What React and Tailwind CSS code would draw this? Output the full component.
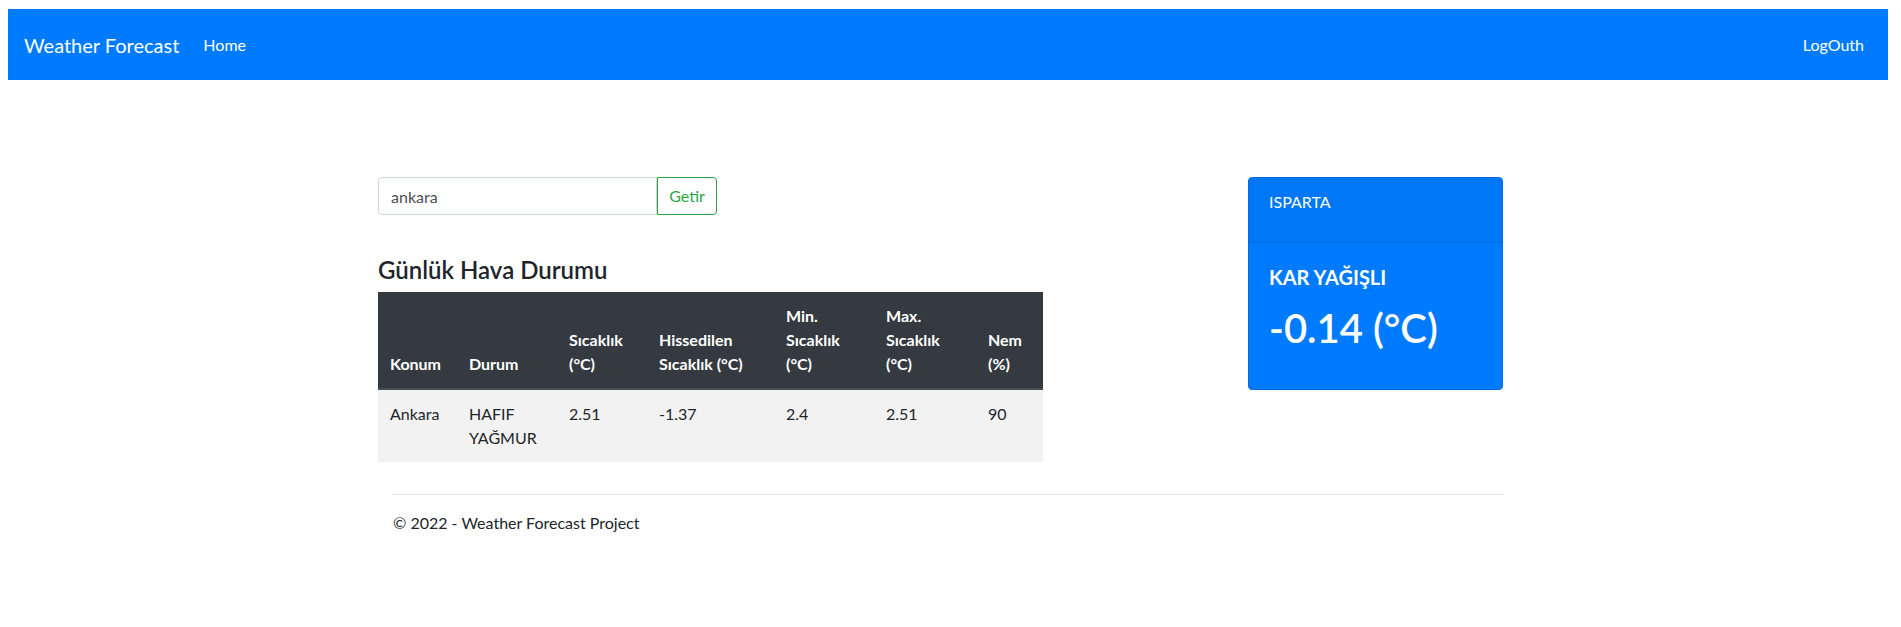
const columns = [
  { label: "Konum", width: "w-[79px]" },
  { label: "Durum", width: "w-[100px]" },
  { label: "Sıcaklık (°C)", width: "w-[90px]" },
  { label: "Hissedilen Sıcaklık (°C)", width: "w-[127px]" },
  { label: "Min. Sıcaklık (°C)", width: "w-[100px]" },
  { label: "Max. Sıcaklık (°C)", width: "w-[102px]" },
  { label: "Nem (%)", width: "w-[67px]" },
]

const rows = [["Ankara", "HAFIF YAĞMUR", "2.51", "-1.37", "2.4", "2.51", "90"]]

export default function App() {
  return (
    <div className="min-h-screen bg-white pl-2 pr-[13px] pt-[9px] font-['Lato','Open_Sans',sans-serif] text-base text-[#212529]">
      {/* Top bar */}
      <nav className="flex h-[71px] items-center bg-[#007bff] px-4 text-white">
        <span className="mr-4 text-xl">Weather Forecast</span>
        <a className="px-2">Home</a>
        <a className="ml-auto px-2">LogOuth</a>
      </nav>

      <main className="mx-auto w-[1140px] pt-[97px]">
        <div className="flex items-start">
          <div>
            <div className="flex h-[38px] w-[339px]">
              <input
                readOnly
                value="ankara"
                className="h-full w-[279px] rounded-l border border-[#ced4da] px-3 text-[#495057] outline-none"
              />
              <button className="h-full w-[60px] rounded-r border border-[#28a745] font-normal text-[#28a745]">
                Getir
              </button>
            </div>

            <h4 className="mb-2 mt-10 text-2xl font-semibold leading-[29px]">Günlük Hava Durumu</h4>

            <table className="w-[665px] table-fixed border-collapse">
              <thead>
                <tr className="bg-[#343a40] text-white">
                  {columns.map((c) => (
                    <th
                      key={c.label}
                      className={`${c.width} border-b-2 border-[#454d55] p-3 text-left align-bottom font-bold leading-6`}
                    >
                      {c.label}
                    </th>
                  ))}
                </tr>
              </thead>
              <tbody>
                {rows.map((r, i) => (
                  <tr key={i} className="bg-[#f2f2f2]">
                    {r.map((v, j) => (
                      <td key={j} className="p-3 align-top leading-6">
                        {v}
                      </td>
                    ))}
                  </tr>
                ))}
              </tbody>
            </table>
          </div>

          <div className="ml-auto mr-[15px] w-[255px] overflow-hidden rounded border border-[#006cdf] bg-[#007bff] text-white">
            <div className="h-[65px] border-b border-[#006cdf] bg-[#0077f7] px-5 pt-3 leading-6">ISPARTA</div>
            <div className="px-5 pb-[37px] pt-[22px]">
              <h5 className="mb-[15px] text-xl font-bold leading-6">KAR YAĞIŞLI</h5>
              <h1 className="text-[40px] font-semibold leading-[48px]">-0.14 (°C)</h1>
            </div>
          </div>
        </div>

        <footer className="mt-8 px-[15px]">
          <hr className="mb-4 border-t border-[#e6e6e6]" />
          <p className="leading-6">© 2022 - Weather Forecast Project</p>
        </footer>
      </main>
    </div>
  )
}
